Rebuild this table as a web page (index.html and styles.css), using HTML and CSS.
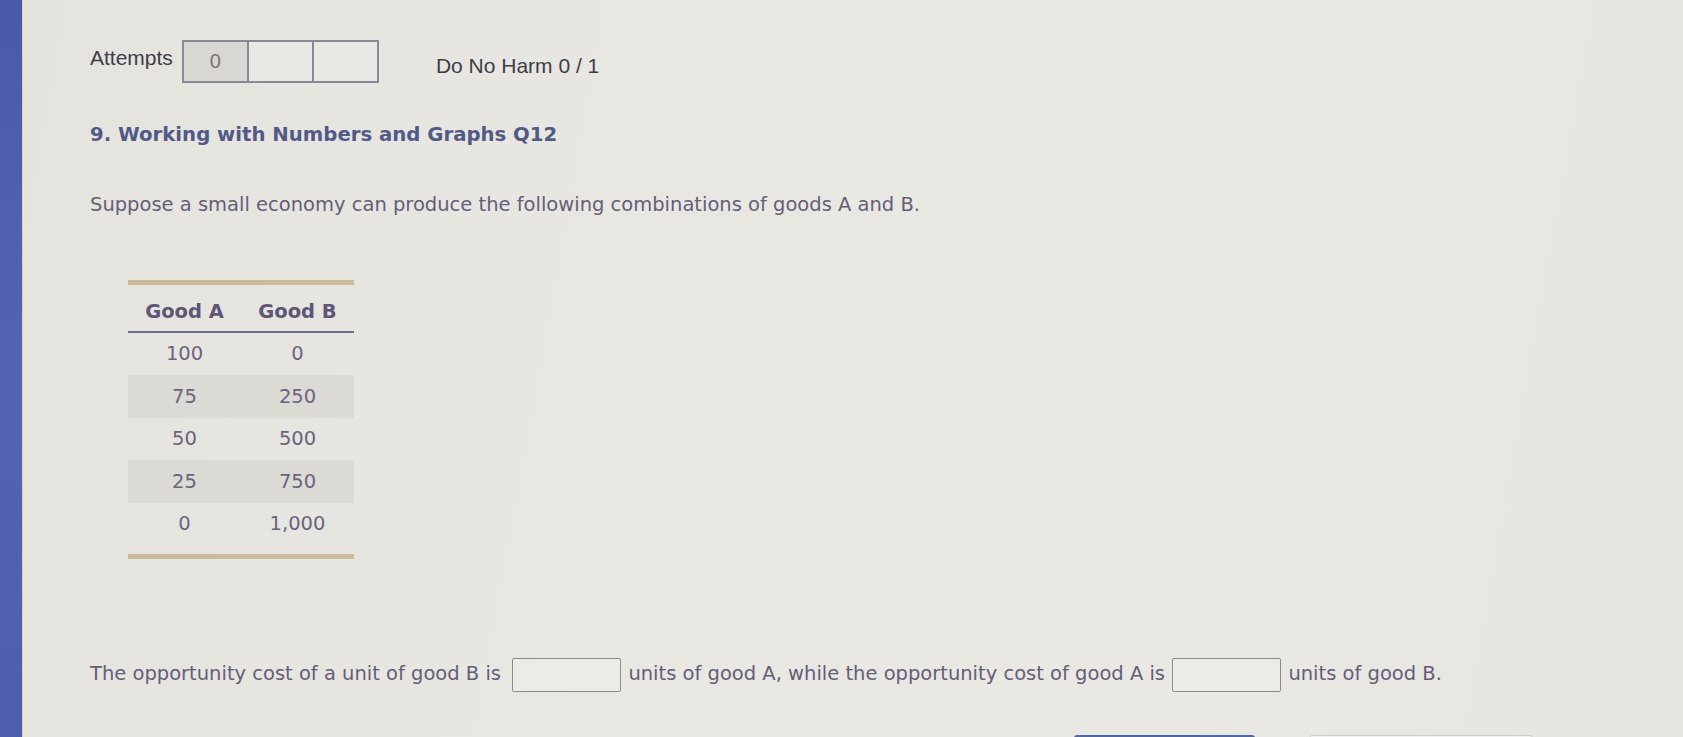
FILE: index.html
```html
<!DOCTYPE html>
<html lang="en">
<head>
<meta charset="utf-8">
<title>Working with Numbers and Graphs Q12</title>
<link rel="stylesheet" href="styles.css">
</head>
<body>
<div class="page">
  <aside class="sidebar"></aside>
  <main class="content">
    <div class="attempts-row">
      <span class="attempts-label">Attempts</span>
      <div class="attempts-boxes">
        <div class="cell used">0</div>
        <div class="cell"></div>
        <div class="cell"></div>
      </div>
      <span class="harm">Do No Harm 0 / 1</span>
    </div>

    <h2 class="q-title">9. Working with Numbers and Graphs Q12</h2>

    <p class="q-text">Suppose a small economy can produce the following combinations of goods A and B.</p>

    <table class="goods">
      <thead>
        <tr><th>Good A</th><th>Good B</th></tr>
      </thead>
      <tbody>
        <tr><td>100</td><td>0</td></tr>
        <tr class="alt"><td>75</td><td>250</td></tr>
        <tr><td>50</td><td>500</td></tr>
        <tr class="alt"><td>25</td><td>750</td></tr>
        <tr><td>0</td><td>1,000</td></tr>
      </tbody>
    </table>

    <p class="answer">The opportunity cost of a unit of good B is <span class="blank first"></span> units of good A, while the opportunity cost of good A is <span class="blank"></span> units of good B.</p>

    <div class="buttons">
      <div class="btn primary"></div>
      <div class="btn secondary"></div>
    </div>
  </main>
</div>
</body>
</html>
```

FILE: styles.css
```css
html, body {
  margin: 0;
  padding: 0;
  height: 100%;
  overflow: hidden;
}
body {
  background: #e8e6e1;
  font-family: "DejaVu Sans", Verdana, sans-serif;
  color: #665f78;
}
.page {
  display: flex;
  min-height: 100%;
}
.sidebar {
  width: 22px;
  flex: none;
  background: linear-gradient(180deg, #4a5aa8 0%, #5264b2 50%, #4c5dac 100%);
  border-right: 1px solid #e8c9c8;
}
.content {
  flex: 1;
  padding: 40px 0 0 67px;
  background: linear-gradient(100deg, #e5e3de 0%, #e9e7e2 40%, #eae8e3 70%, #e7e5e0 100%);
}

.attempts-row {
  display: flex;
  align-items: center;
  height: 43px;
}
.attempts-label {
  font-family: "Liberation Sans", Arial, sans-serif;
  font-size: 21px;
  color: #3e3d4a;
  margin-right: 9px;
  margin-bottom: 8px;
}
.attempts-boxes {
  display: flex;
  border: 2px solid #8b8794;
  height: 39px;
}
.cell {
  width: 63px;
  height: 39px;
  display: flex;
  align-items: center;
  justify-content: center;
  font-family: "Liberation Sans", Arial, sans-serif;
  font-size: 20px;
  color: #77727f;
  border-left: 2px solid #8b8794;
  background: #eae8e4;
}
.cell:first-child {
  border-left: none;
}
.cell.used {
  background: #d9d7d2;
}
.harm {
  font-family: "Liberation Sans", Arial, sans-serif;
  font-size: 21px;
  color: #3e3d4a;
  margin-left: 57px;
  margin-top: 8px;
}

.q-title {
  margin: 40px 0 0 0;
  font-size: 19.7px;
  line-height: 24px;
  font-weight: bold;
  color: #515a86;
}
.q-text {
  margin: 46px 0 0 0;
  font-size: 19.5px;
  line-height: 24px;
  color: #645e79;
}

.goods {
  margin: 63px 0 0 38px;
  border-collapse: collapse;
  width: 226px;
  border-top: 5px solid #cbbb98;
  border-bottom: 5px solid #cbbb98;
  font-size: 19.5px;
}
.goods th {
  height: 49px;
  padding: 7px 0 0 0;
  width: 50%;
  font-weight: bold;
  color: #5b5775;
  text-align: center;
  vertical-align: middle;
  border-bottom: 2px solid #6e6f8b;
  box-sizing: border-box;
}
.goods td {
  height: 42.5px;
  padding: 0;
  text-align: center;
  vertical-align: middle;
  color: #6a6480;
}
.goods tbody tr:last-child td {
  height: 42.5px;
  padding-bottom: 9px;
}
.goods tr.alt td {
  background: #dcdad5;
}

.answer {
  margin: 97px 0 0 0;
  font-size: 19.5px;
  line-height: 35px;
  color: #645e79;
}
.blank {
  display: inline-block;
  width: 107px;
  height: 32px;
  border: 1px solid #8c8893;
  border-radius: 2px;
  background: #ecebe7;
  vertical-align: middle;
  margin: 0 1px;
}
.blank.first {
  margin-left: 5px;
}

.buttons {
  display: flex;
  gap: 54px;
  margin: 43px 0 0 984px;
}
.btn {
  height: 30px;
  border-radius: 3px;
}
.btn.primary {
  width: 181px;
  background: #4e6aa6;
}
.btn.secondary {
  width: 222px;
  background: #f1f0ee;
  border: 1px solid #cfcdc9;
}
```
